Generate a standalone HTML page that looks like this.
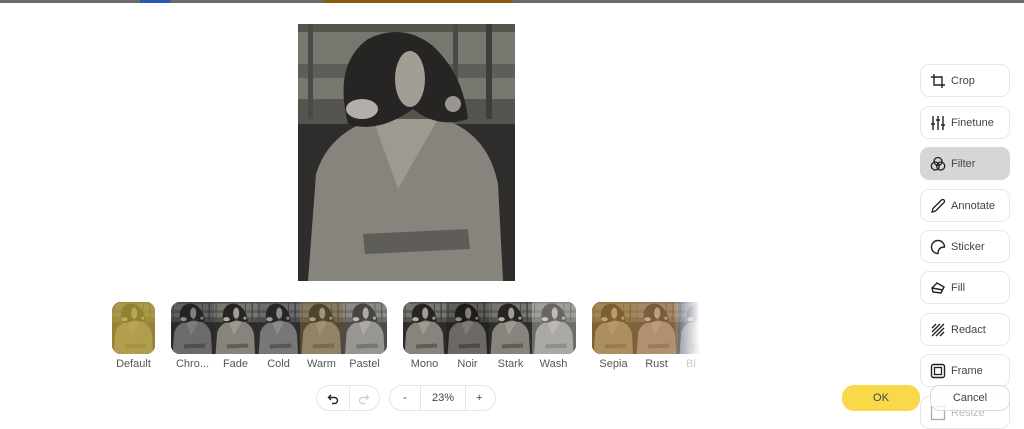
<!DOCTYPE html>
<html><head><meta charset="utf-8"><style>
*{margin:0;padding:0;box-sizing:border-box}
body{width:1024px;height:424px;overflow:hidden;background:#fff;font-family:"Liberation Sans",sans-serif;position:relative;color:#333}
.top{position:absolute;left:0;top:0;width:1024px;height:3px;background:#6a6a6a}
.top .o{position:absolute;left:323px;width:190px;height:3px;background:#8a5a10}
.top .b{position:absolute;left:140px;width:30px;height:3px;background:#2a5ab0}
.photo{position:absolute;left:298px;top:24px;width:217px;height:257px}
.rb{position:absolute;left:920px;width:90px;height:33px;border:1px solid #e8e8e8;border-radius:9px;background:#fff;font-size:11px;color:#444;display:flex;align-items:center;padding-left:30px}
.rb svg{position:absolute;left:9px;top:8px}
.rb.sel{background:#d6d6d6;border-color:#d6d6d6}
.th{position:absolute;top:302px;height:52px;overflow:hidden}
.lbl{position:absolute;top:358px;font-size:11px;color:#555;width:43px;text-align:center}
.pill{position:absolute;top:385px;height:26px;border:1px solid #e6e6e6;border-radius:13px;background:#fff;font-size:11px;color:#444}
.pill span{position:absolute;top:6px}
</style></head><body>
<div class="top"><div class="b"></div><div class="o"></div></div>
<svg width="0" height="0" style="position:absolute">
<defs>
<symbol id="fig" viewBox="0 0 217 257" preserveAspectRatio="xMidYMid slice">
<rect width="217" height="257" fill="#4a4946"/>
<rect width="217" height="85" fill="#77766f"/>
<rect y="0" width="217" height="8" fill="#55544f"/>
<rect y="40" width="217" height="14" fill="#5e5d58"/>
<rect y="75" width="217" height="25" fill="#55544f"/>
<rect y="100" width="217" height="157" fill="#2e2d2b"/>
<rect x="188" y="0" width="6" height="95" fill="#3e3d3a"/>
<rect x="10" y="0" width="5" height="95" fill="#4a4946"/>
<rect x="155" y="0" width="5" height="80" fill="#4a4946"/>
<path d="M10 257 L18 150 Q30 110 75 95 L145 95 Q190 110 200 160 L205 257 Z" fill="#87847d"/>
<path d="M75 95 L100 165 L140 95 Z" fill="#9e9a92"/>
<path d="M65 210 L170 205 L172 225 L67 230 Z" fill="#5f5d58"/>
<path d="M50 100 Q35 40 70 15 Q105 -2 135 22 Q165 50 170 95 Q140 105 115 85 Q80 110 50 100 Z" fill="#262523"/>
<ellipse cx="112" cy="55" rx="15" ry="28" fill="#a29d95"/>
<ellipse cx="64" cy="85" rx="16" ry="10" fill="#b3afa8"/>
<ellipse cx="155" cy="80" rx="8" ry="8" fill="#9a968f"/>
</symbol>
</defs>
</svg>
<svg class="photo" viewBox="0 0 217 257"><use href="#fig" width="217" height="257"/></svg>

<div class="th" style="left:112px;width:43px;border-radius:9px"><svg width="43" height="52"><use href="#fig" width="43" height="52"/><rect width="43" height="52" fill="#c2a83a" opacity=".7"/></svg></div>
<div class="th" style="left:171px;width:216px;border-radius:9px"><svg width="216" height="52">
<use href="#fig" x="0" width="43" height="52"/><use href="#fig" x="43" width="43" height="52"/><use href="#fig" x="86" width="43" height="52"/><use href="#fig" x="129" width="43" height="52"/><use href="#fig" x="172" width="44" height="52"/>
<rect x="0" width="43" height="52" fill="#202030" opacity=".25"/><rect x="86" width="43" height="52" fill="#203050" opacity=".15"/><rect x="129" width="43" height="52" fill="#a08040" opacity=".35"/><rect x="172" width="44" height="52" fill="#fff" opacity=".15"/></svg></div>
<div class="th" style="left:403px;width:173px;border-radius:9px"><svg width="173" height="52">
<use href="#fig" x="0" width="43" height="52"/><use href="#fig" x="43" width="43" height="52"/><use href="#fig" x="86" width="43" height="52"/><use href="#fig" x="129" width="44" height="52"/>
<rect x="43" width="43" height="52" fill="#000" opacity=".2"/><rect x="129" width="44" height="52" fill="#fff" opacity=".3"/></svg></div>
<div class="th" style="left:592px;width:108px;border-radius:9px 0 0 9px"><svg width="108" height="52">
<defs><linearGradient id="fd" x1="0" x2="1"><stop offset=".75" stop-color="#fff" stop-opacity="0"/><stop offset="1" stop-color="#fff"/></linearGradient></defs>
<use href="#fig" x="0" width="43" height="52"/><use href="#fig" x="43" width="43" height="52"/><use href="#fig" x="86" width="43" height="52"/>
<rect width="43" height="52" fill="#d09a40" opacity=".5"/><rect x="43" width="43" height="52" fill="#e0a060" opacity=".45"/><rect x="86" width="22" height="52" fill="#8090c0" opacity=".3"/>
<rect width="108" height="52" fill="url(#fd)"/></svg></div>

<div class="lbl" style="left:112px">Default</div>
<div class="lbl" style="left:171px">Chro...</div>
<div class="lbl" style="left:214px">Fade</div>
<div class="lbl" style="left:257px">Cold</div>
<div class="lbl" style="left:300px">Warm</div>
<div class="lbl" style="left:343px">Pastel</div>
<div class="lbl" style="left:403px">Mono</div>
<div class="lbl" style="left:446px">Noir</div>
<div class="lbl" style="left:489px">Stark</div>
<div class="lbl" style="left:532px">Wash</div>
<div class="lbl" style="left:592px">Sepia</div>
<div class="lbl" style="left:635px">Rust</div>
<div class="lbl" style="left:678px;color:#ccc;width:22px;overflow:hidden;text-align:left;padding-left:8px">Bl</div>

<div class="pill" style="left:316px;width:64px">
<svg style="position:absolute;left:10px;top:7px" width="12" height="12" viewBox="0 0 12 12"><path d="M4 2 L1.5 4.5 L4 7 M1.5 4.5 H7.5 A3 3 0 0 1 7.5 10.5 H5" fill="none" stroke="#222" stroke-width="1.4"/></svg>
<div style="position:absolute;left:32px;top:0;width:1px;height:24px;background:#e6e6e6"></div>
<svg style="position:absolute;left:41px;top:7px" width="12" height="12" viewBox="0 0 12 12"><path d="M8 2 L10.5 4.5 L8 7 M10.5 4.5 H4.5 A3 3 0 0 0 4.5 10.5 H7" fill="none" stroke="#ccc" stroke-width="1.2"/></svg>
</div>
<div class="pill" style="left:389px;width:107px">
<span style="left:13px">-</span>
<div style="position:absolute;left:30px;top:0;width:1px;height:24px;background:#e6e6e6"></div>
<span style="left:42px">23%</span>
<div style="position:absolute;left:75px;top:0;width:1px;height:24px;background:#e6e6e6"></div>
<span style="left:86px">+</span>
</div>

<div class="rb" style="top:64px"><svg width="16" height="16" viewBox="0 0 16 16"><path d="M4 1 V12 H15 M1 4 H12 V15" fill="none" stroke="#222" stroke-width="1.4"/></svg>Crop</div>
<div class="rb" style="top:106px"><svg width="16" height="16" viewBox="0 0 16 16"><path d="M3 1V15M8 1V15M13 1V15M1 9H5M6 5H10M11 10H15" fill="none" stroke="#222" stroke-width="1.4"/></svg>Finetune</div>
<div class="rb sel" style="top:147px"><svg width="16" height="16" viewBox="0 0 16 16"><g fill="none" stroke="#222" stroke-width="1.3"><circle cx="8" cy="5.5" r="4"/><circle cx="5.3" cy="10" r="4"/><circle cx="10.7" cy="10" r="4"/></g></svg>Filter</div>
<div class="rb" style="top:189px"><svg width="16" height="16" viewBox="0 0 16 16"><path d="M2 14 L3 10.5 L11.5 2 A1.5 1.5 0 0 1 14 4.5 L5.5 13 Z" fill="none" stroke="#222" stroke-width="1.3"/></svg>Annotate</div>
<div class="rb" style="top:230px"><svg width="16" height="16" viewBox="0 0 16 16"><path d="M14.5 8 A6.5 6.5 0 1 0 8 14.5 Q8 8 14.5 8 Z" fill="none" stroke="#222" stroke-width="1.4"/></svg>Sticker</div>
<div class="rb" style="top:271px"><svg width="16" height="16" viewBox="0 0 16 16"><path d="M2 8 L7 3 L14 7 L11 13 L3 12 Z M2 8 L13 10" fill="none" stroke="#222" stroke-width="1.4"/></svg>Fill</div>
<div class="rb" style="top:313px"><svg width="16" height="16" viewBox="0 0 16 16"><path d="M2 6L6 2M2 10L10 2M2 14L14 2M6 14L14 6M10 14L14 10" stroke="#222" stroke-width="1.4"/></svg>Redact</div>
<div class="rb" style="top:354px"><svg width="16" height="16" viewBox="0 0 16 16"><rect x="1.5" y="1.5" width="13" height="13" rx="2" fill="none" stroke="#222" stroke-width="1.4"/><rect x="4.5" y="4.5" width="7" height="7" fill="none" stroke="#222" stroke-width="1.3"/></svg>Frame</div>
<div class="rb" style="top:396px;color:#bbb"><svg width="16" height="16" viewBox="0 0 16 16"><rect x="1.5" y="1.5" width="13" height="13" fill="none" stroke="#aaa" stroke-width="1.3"/></svg>Resize</div>

<div style="position:absolute;left:842px;top:385px;width:78px;height:26px;border-radius:12px;background:#f9d84a;font-size:11px;color:#444;text-align:center;line-height:26px">OK</div>
<div style="position:absolute;left:930px;top:385px;width:80px;height:26px;border-radius:10px;background:rgba(255,255,255,.8);border:1px solid #d6dce4;font-size:11px;color:#444;text-align:center;line-height:24px">Cancel</div>
</body></html>
